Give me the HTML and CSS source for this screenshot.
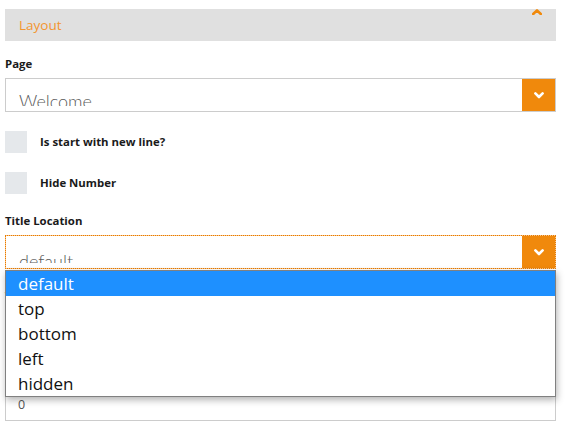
FILE: index.html
```html
<!DOCTYPE html>
<html lang="en">
<head>
<meta charset="utf-8">
<title>Layout properties</title>
<link rel="stylesheet" href="styles.css">
</head>
<body>
<div class="panel">
  <div class="panel-head">
    <span class="panel-title">Layout</span>
    <svg class="head-chevron" width="10" height="6" viewBox="0 0 10 6"><polyline points="1.2,5 5,1.4 8.8,5" fill="none" stroke="#f0890c" stroke-width="2.6" stroke-linecap="round" stroke-linejoin="round"/></svg>
  </div>
  <div class="panel-body">
    <div class="field">
      <div class="field-label">Page</div>
      <div class="select">
        <div class="select-value">Welcome</div>
        <div class="select-btn"><svg width="10" height="7" viewBox="0 0 10 7"><polyline points="1.4,1.4 5,5 8.6,1.4" fill="none" stroke="#fff" stroke-width="2.6" stroke-linecap="round" stroke-linejoin="round"/></svg></div>
      </div>
    </div>
    <div class="check-row">
      <span class="check-box"></span>
      <span class="check-label">Is start with new line?</span>
    </div>
    <div class="check-row">
      <span class="check-box"></span>
      <span class="check-label">Hide Number</span>
    </div>
    <div class="field">
      <div class="field-label">Title Location</div>
      <div class="select-wrap">
        <div class="select select-focus">
          <div class="select-value select-value-low">default</div>
          <div class="select-btn"><svg width="10" height="7" viewBox="0 0 10 7"><polyline points="1.4,1.4 5,5 8.6,1.4" fill="none" stroke="#fff" stroke-width="2.6" stroke-linecap="round" stroke-linejoin="round"/></svg></div>
        </div>
        <ul class="listbox">
          <li class="option option-active">default</li>
          <li class="option">top</li>
          <li class="option">bottom</li>
          <li class="option">left</li>
          <li class="option">hidden</li>
        </ul>
      </div>
    </div>
    <div class="field">
      <div class="field-label">Width</div>
      <div class="text-input"></div>
    </div>
    <div class="field">
      <div class="field-label">Indent</div>
      <div class="text-input">0</div>
    </div>
  </div>
</div>
</body>
</html>
```

FILE: styles.css
```css
html, body {
  margin: 0;
  padding: 0;
  background: #ffffff;
  overflow: hidden;
}

body {
  font-family: "Open Sans", "Liberation Sans", sans-serif;
  color: #1f1f1f;
}

.panel {
  width: 551px;
  margin: 9px 0 0 5px;
}

.panel-head {
  height: 32px;
  background: #e0e0e0;
  display: flex;
  align-items: center;
  justify-content: space-between;
  padding: 0 14px 0 14px;
  box-sizing: border-box;
}

.panel-title {
  font-size: 13.5px;
  font-weight: 400;
  color: #f39530;
  line-height: 19px;
}

.head-chevron {
  align-self: flex-start;
  margin-top: 0;
  display: block;
}

.panel-body {
  display: flex;
  flex-direction: column;
  gap: 19px;
  padding-top: 15px;
}

.field {
  display: flex;
  flex-direction: column;
  gap: 6px;
}

.field-label {
  font-size: 11.4px;
  font-weight: 700;
  line-height: 16px;
  color: #1a1a1a;
}

.select-wrap {
  position: relative;
}

.select {
  height: 34px;
  box-sizing: border-box;
  border: 1px solid #cccccc;
  display: flex;
  background: #fff;
}

.select-focus {
  border: 1px dotted #e87c00;
  background: linear-gradient(#fff, #fff) padding-box, #f8c48a border-box;
}

.select-value {
  flex: 1;
  box-sizing: border-box;
  height: 27px;
  padding: 11px 13px 0;
  overflow: hidden;
  font-family: "Lato", "Open Sans", sans-serif;
  font-size: 18px;
  font-weight: 300;
  line-height: 22px;
  color: #5a5a5a;
}

.select-value-low {
  padding-top: 14px;
}

.select-btn {
  width: 33px;
  background: #f0890c;
  display: flex;
  align-items: center;
  justify-content: center;
}

.select-btn svg {
  display: block;
}

.check-row {
  display: flex;
  align-items: center;
  height: 22px;
}

.check-box {
  width: 22px;
  height: 22px;
  background: #e5e8eb;
  flex: none;
}

.check-label {
  margin-left: 13px;
  font-size: 11.4px;
  font-weight: 700;
  line-height: 16px;
  color: #1a1a1a;
}

.listbox {
  position: absolute;
  left: 0;
  right: 0;
  top: calc(100% + 1px);
  margin: 0;
  padding: 0;
  list-style: none;
  background: #fff;
  border: 1px solid #808080;
  box-shadow: 1px 3px 7px rgba(0, 0, 0, 0.3);
  z-index: 10;
}

.option {
  height: 25px;
  line-height: 25px;
  padding-left: 12px;
  font-size: 17px;
  color: #111;
}

.option-active {
  background: #1e90ff;
  color: #fff;
}

.text-input {
  height: 35px;
  box-sizing: border-box;
  border: 1px solid #cccccc;
  padding: 2px 12px 0;
  font-size: 12.5px;
  line-height: 31px;
  color: #555;
}
```
